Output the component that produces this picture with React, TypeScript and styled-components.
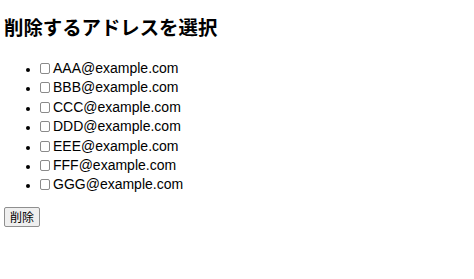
import styled, { createGlobalStyle } from "styled-components";

const GlobalStyle = createGlobalStyle`
  body {
    margin: 0;
    background: #fff;
    color: #000;
    font-family: "Liberation Sans", Arial, "Noto Sans CJK JP", sans-serif;
  }
`;

const addresses = [
  "AAA@example.com",
  "BBB@example.com",
  "CCC@example.com",
  "DDD@example.com",
  "EEE@example.com",
  "FFF@example.com",
  "GGG@example.com",
];

function App() {
  return (
    <>
      <GlobalStyle />
      <Page>
        <Title>削除するアドレスを選択</Title>
        <AddressList>
          {addresses.map((address) => (
            <Item key={address}>
              <label>
                <Check type="checkbox" />
                {address}
              </label>
            </Item>
          ))}
        </AddressList>
        <DeleteButton type="button">削除</DeleteButton>
      </Page>
    </>
  );
}

const Page = styled.main`
  padding: 0 4px;
`;

const Title = styled.h1`
  font-family: "Noto Sans CJK JP", sans-serif;
  font-size: 19.4px;
  font-weight: 700;
  line-height: 27px;
  margin: 13px 0 19px;
`;

const AddressList = styled.ul`
  list-style: disc;
  margin: 0 0 12px;
  padding-left: 36px;
`;

const Item = styled.li`
  font-size: 14px;
  line-height: 19.4px;
  height: 19.4px;
  &::marker {
    font-size: 12px;
  }
`;

const Check = styled.input`
  appearance: none;
  display: inline-block;
  width: 10px;
  height: 11px;
  margin: 0 3px 0 0;
  vertical-align: -1px;
  border: 1px solid #8a8a8a;
  border-radius: 2px;
  background: #fff;
  box-sizing: border-box;
`;

const DeleteButton = styled.button`
  display: block;
  font-family: "Noto Sans CJK JP", sans-serif;
  font-size: 12px;
  height: 20px;
  padding: 0 5px;
  border: 1px solid #8f8f8f;
  border-radius: 2px;
  background: #efefef;
  color: #000;
  line-height: 18px;
`;

export default App;
